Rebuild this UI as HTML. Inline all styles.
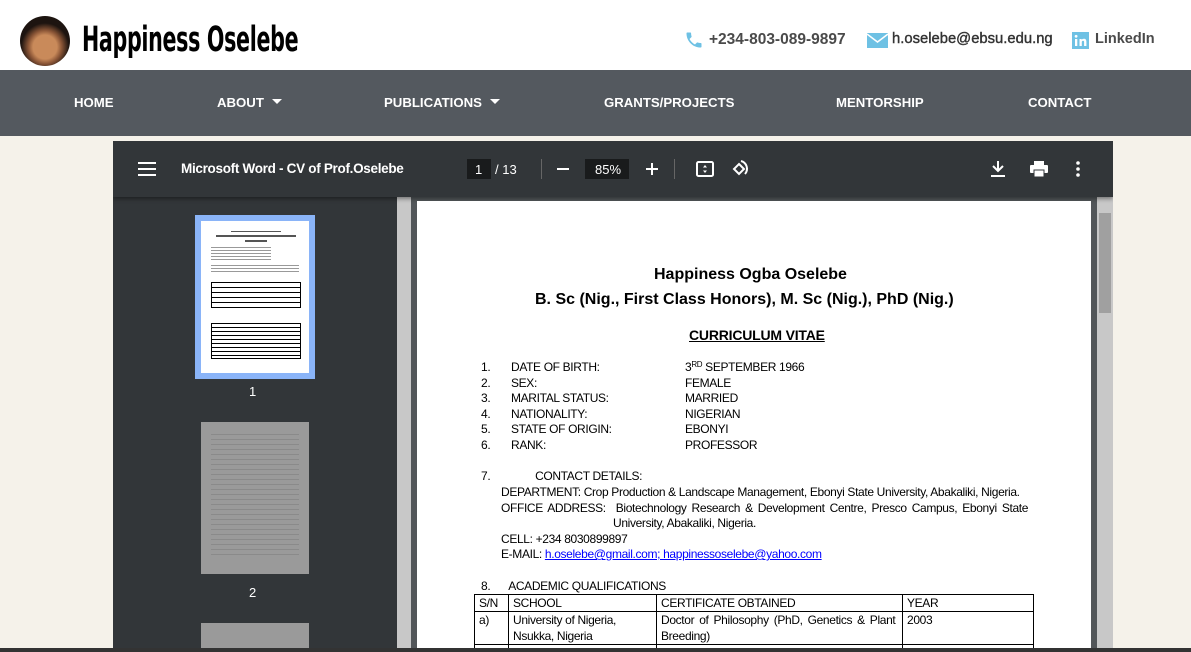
<!DOCTYPE html>
<html><head><meta charset="utf-8"><style>
*{margin:0;padding:0;box-sizing:border-box}
body{width:1191px;height:652px;overflow:hidden;background:#f5f2ea;font-family:"Liberation Sans",sans-serif;position:relative}
.hdr{position:absolute;left:0;top:0;width:1191px;height:70px;background:#fff}
.av{position:absolute;left:20px;top:16px;width:50px;height:50px;border-radius:50%;background:radial-gradient(circle at 50% 62%,#c98a5a 0 30%,#8a5536 42%,#1d1410 60%);}
.name{position:absolute;left:82px;top:20px;font-family:"DejaVu Sans Condensed","Liberation Sans Narrow",sans-serif;font-weight:bold;font-size:35px;letter-spacing:-0.5px;color:#000;transform:scaleX(.655);transform-origin:left;white-space:nowrap}
.ct{position:absolute;top:31px;font-size:15px;font-weight:bold;color:#4a4a4a}
.nav{position:absolute;left:0;top:70px;width:1191px;height:66px;background:#54595f}
.nav span{position:absolute;top:25px;color:#fff;font-weight:bold;font-size:13.2px}
.car{display:inline-block;border-left:5px solid transparent;border-right:5px solid transparent;border-top:5px solid #fff;margin-left:8px;vertical-align:3px}
.v{position:absolute;left:113px;top:141px;width:1000px;height:511px;background:#525659;overflow:hidden}
.tb{position:absolute;left:0;top:0;width:1000px;height:56px;background:#323639;color:#fff;box-shadow:0 2px 4px rgba(0,0,0,.4)}
.sb{position:absolute;left:0;top:56px;width:284px;height:455px;background:#323639}
.scr{position:absolute;top:56px;width:14px;height:455px;background:#c8c8c8}
.pg{position:absolute;left:304px;top:60px;width:674px;height:460px;background:#fff;color:#000;font-size:12px;letter-spacing:-0.35px}
.pg div{position:absolute;white-space:nowrap}
table{position:absolute;left:57px;top:393px;border-collapse:collapse;font-size:12px;table-layout:fixed;width:559px}
td{border:1px solid #000;padding:0 4px;vertical-align:top;line-height:16px;white-space:nowrap;overflow:hidden}
a{color:#00f}
.ln{position:absolute;height:2px;background:#555}
</style></head><body>
<div class="hdr">
<div class="av"></div>
<div class="name">Happiness Oselebe</div>
<svg style="position:absolute;left:684px;top:30px" width="20" height="20" viewBox="0 0 24 24"><path fill="#6ec1e4" d="M6.6 10.8c1.4 2.8 3.8 5.1 6.6 6.6l2.2-2.2c.3-.3.7-.4 1-.2 1.1.4 2.3.6 3.6.6.6 0 1 .4 1 1V20c0 .6-.4 1-1 1C10.6 21 3 13.4 3 4c0-.6.4-1 1-1h3.5c.6 0 1 .4 1 1 0 1.3.2 2.5.6 3.6.1.3 0 .7-.2 1z"/></svg>
<div class="ct" style="left:709px;font-size:15.5px">+234-803-089-9897</div>
<svg style="position:absolute;left:867px;top:33px" width="21" height="15" viewBox="0 0 21 15"><rect width="21" height="15" fill="#6ec1e4"/><path d="M0 1l10.5 8L21 1" stroke="#fff" stroke-width="1.5" fill="none"/></svg>
<div class="ct" style="left:892px;font-size:14.8px;font-weight:normal;color:#333;-webkit-text-stroke:.4px #333">h.oselebe@ebsu.edu.ng</div>
<svg style="position:absolute;left:1072px;top:32px" width="17" height="17" viewBox="0 0 17 17"><rect width="17" height="17" fill="#6ec1e4"/><rect x="3" y="7" width="2.3" height="7" fill="#fff"/><circle cx="4.1" cy="4.3" r="1.4" fill="#fff"/><path d="M7.5 7h2.2v1c.5-.8 1.3-1.2 2.3-1.2 1.6 0 2.4 1 2.4 2.8V14h-2.3v-4c0-.8-.3-1.3-1-1.3s-1.3.5-1.3 1.3v4H7.5z" fill="#fff"/></svg>
<div class="ct" style="left:1095px;font-size:14.5px">LinkedIn</div>
</div>
<div class="nav">
<span style="left:74px">HOME</span>
<span style="left:217px">ABOUT<i class="car"></i></span>
<span style="left:384px">PUBLICATIONS<i class="car"></i></span>
<span style="left:604px">GRANTS/PROJECTS</span>
<span style="left:836px">MENTORSHIP</span>
<span style="left:1028px">CONTACT</span>
</div>
<div class="v">
<div class="sb">
<div style="position:absolute;left:82px;top:18px;width:120px;height:164px;background:#8ab4f8"></div>
<div style="position:absolute;left:88px;top:24px;width:108px;height:152px;background:#fff">
<div class="ln" style="left:30px;top:10px;width:50px;height:1px"></div>
<div class="ln" style="left:15px;top:14px;width:80px"></div>
<div class="ln" style="left:44px;top:19px;width:22px"></div>
<div class="ln" style="left:10px;top:26px;width:60px;height:14px;background:repeating-linear-gradient(#999 0 1px,#fff 1px 3px)"></div>
<div class="ln" style="left:10px;top:44px;width:88px;height:8px;background:repeating-linear-gradient(#999 0 1px,#fff 1px 3px)"></div>
<div style="position:absolute;left:10px;top:61px;width:90px;height:26px;border:1px solid #000;background:repeating-linear-gradient(#fff 0 4px,#000 4px 5px)"></div>
<div style="position:absolute;left:10px;top:102px;width:90px;height:36px;border:1px solid #000;background:repeating-linear-gradient(#fff 0 3px,#000 3px 4px)"></div>
</div>
<div style="position:absolute;left:136px;top:187px;color:#fff;font-size:13px">1</div>
<div style="position:absolute;left:88px;top:225px;width:108px;height:152px;background:#9a9a9a">
<div style="position:absolute;left:10px;top:12px;width:88px;height:125px;background:repeating-linear-gradient(#8a8a8a 0 1px,transparent 1px 5px)"></div>
</div>
<div style="position:absolute;left:136px;top:388px;color:#fff;font-size:13px">2</div>
<div style="position:absolute;left:88px;top:426px;width:108px;height:40px;background:#9a9a9a"></div>
</div>
<div class="scr" style="left:284px"></div>
<div class="scr" style="left:984px;width:16px"><div style="position:absolute;left:2px;top:16px;width:12px;height:100px;background:#a0a0a0"></div></div>
<div class="tb">
<svg style="position:absolute;left:25px;top:21px" width="18" height="14"><path d="M0 1h18M0 7h18M0 13h18" stroke="#fff" stroke-width="2"/></svg>
<div style="position:absolute;left:68px;top:20px;font-size:13.5px;font-weight:bold;letter-spacing:-0.3px">Microsoft Word - CV of Prof.Oselebe</div>
<div style="position:absolute;left:354px;top:18px;width:24px;height:20px;background:#191b1c;font-size:13px;padding:3px 0 0 8px">1</div>
<div style="position:absolute;left:382px;top:21px;font-size:13px">/ 13</div>
<div style="position:absolute;left:428px;top:18px;width:1px;height:20px;background:#666"></div>
<div style="position:absolute;left:444px;top:27px;width:12px;height:2px;background:#fff"></div>
<div style="position:absolute;left:472px;top:18px;width:44px;height:20px;background:#191b1c;font-size:13px;padding:3px 0 0 10px">85%</div>
<div style="position:absolute;left:533px;top:27px;width:12px;height:2px;background:#fff"></div>
<div style="position:absolute;left:538px;top:22px;width:2px;height:12px;background:#fff"></div>
<div style="position:absolute;left:561px;top:18px;width:1px;height:20px;background:#666"></div>
<svg style="position:absolute;left:583px;top:20px" width="18" height="16" viewBox="0 0 18 16"><rect x="1" y="1" width="16" height="14" rx="1.5" stroke="#fff" stroke-width="2" fill="none"/><path d="M9 4l-2 2.5h4zM9 12l-2-2.5h4z" fill="#fff"/></svg>
<svg style="position:absolute;left:617px;top:18px" width="20" height="20" viewBox="0 0 20 20"><path d="M9 5l5 5-5 5-5-5z" stroke="#fff" stroke-width="2" fill="none"/><path d="M11 2a8 8 0 0 1 4 13" stroke="#fff" stroke-width="2" fill="none"/></svg>
<svg style="position:absolute;left:878px;top:20px" width="14" height="16"><path d="M7 0v9M2 5l5 5 5-5M0 15h14" stroke="#fff" stroke-width="2" fill="none"/></svg>
<svg style="position:absolute;left:917px;top:20px" width="18" height="16"><rect x="4" y="0" width="10" height="4" fill="#fff"/><rect x="0" y="4" width="18" height="8" rx="1" fill="#fff"/><rect x="4" y="9" width="10" height="7" fill="#fff" stroke="#323639"/></svg>
<svg style="position:absolute;left:963px;top:20px" width="4" height="16"><circle cx="2" cy="2" r="1.8" fill="#fff"/><circle cx="2" cy="8" r="1.8" fill="#fff"/><circle cx="2" cy="14" r="1.8" fill="#fff"/></svg>
</div>
<div class="pg">
<div style="left:237px;top:65px;font-size:16px;font-weight:bold;letter-spacing:0">Happiness Ogba Oselebe</div>
<div style="left:118px;top:90px;font-size:16px;font-weight:bold;letter-spacing:0">B. Sc (Nig., First Class Honors), M. Sc (Nig.), PhD (Nig.)</div>
<div style="left:272px;top:126px;font-size:14px;font-weight:bold;text-decoration:underline;letter-spacing:-0.2px">CURRICULUM VITAE</div>
<div style="left:64px;top:159px;line-height:15.5px">1.<br>2.<br>3.<br>4.<br>5.<br>6.</div>
<div style="left:94px;top:159px;line-height:15.5px">DATE OF BIRTH:<br>SEX:<br>MARITAL STATUS:<br>NATIONALITY:<br>STATE OF ORIGIN:<br>RANK:</div>
<div style="left:268px;top:159px;line-height:15.5px">3<span style="font-size:8px;vertical-align:top;line-height:10px">RD</span> SEPTEMBER 1966<br>FEMALE<br>MARRIED<br>NIGERIAN<br>EBONYI<br>PROFESSOR</div>
<div style="left:64px;top:268px">7.&nbsp;&nbsp;&nbsp;&nbsp;&nbsp;&nbsp;&nbsp;&nbsp;&nbsp;&nbsp;&nbsp;&nbsp;&nbsp;&nbsp;&nbsp;CONTACT DETAILS:</div>
<div style="left:84px;top:284px">DEPARTMENT: Crop Production &amp; Landscape Management, Ebonyi State University, Abakaliki, Nigeria.</div>
<div style="left:84px;top:300px;word-spacing:2px">OFFICE ADDRESS:&nbsp; Biotechnology Research &amp; Development Centre, Presco Campus, Ebonyi State</div>
<div style="left:196px;top:315px">University, Abakaliki, Nigeria.</div>
<div style="left:84px;top:331px">CELL: +234 8030899897</div>
<div style="left:84px;top:346px">E-MAIL: <a style="text-decoration:underline">h.oselebe@gmail.com; happinessoselebe@yahoo.com</a></div>
<div style="left:64px;top:378px">8.&nbsp;&nbsp;&nbsp;&nbsp;&nbsp;&nbsp;ACADEMIC QUALIFICATIONS</div>
<table><colgroup><col style="width:34px"><col style="width:148px"><col style="width:246px"><col style="width:131px"></colgroup>
<tr><td>S/N</td><td>SCHOOL</td><td>CERTIFICATE OBTAINED</td><td>YEAR</td></tr>
<tr><td>a)</td><td>University of Nigeria,<br>Nsukka, Nigeria</td><td style="word-spacing:2px">Doctor of Philosophy (PhD, Genetics &amp; Plant<br>Breeding)</td><td>2003</td></tr>
<tr><td>b)</td><td>University of Nigeria</td><td style="word-spacing:2px">Master of Science (M. Sc Genetics &amp; Plant</td><td>1998</td></tr></table>
</div>
</div>
<div style="position:absolute;left:0;top:648px;width:1191px;height:4px;background:#333"></div>
</body></html>
